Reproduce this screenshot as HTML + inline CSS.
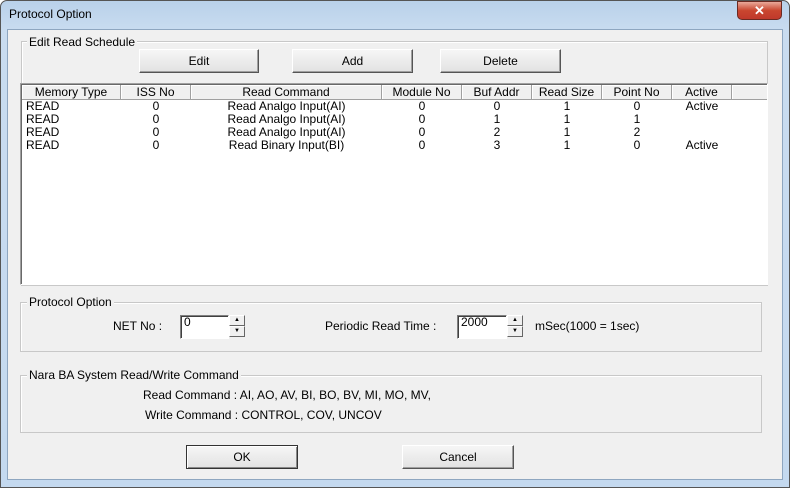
<!DOCTYPE html>
<html><head><style>
*{margin:0;padding:0;box-sizing:border-box}
body{width:790px;height:488px;background:#fff;font-family:"Liberation Sans",sans-serif;font-size:12px;color:#000;position:relative;overflow:hidden}
.abs{position:absolute}
.frame{left:0;top:0;width:790px;height:488px;border:1px solid #555;border-radius:7px 7px 0 0;background:linear-gradient(#b9d1ea,#c9dcf0 30px,#c4d9ef)}
.client{left:7px;top:29px;width:776px;height:451px;background:#f0f0f0;border:1px solid #8ea6c0}
.group{border:1px solid #c8c8c8;box-shadow:inset 1px 1px 0 #fff}
.legend{background:#f0f0f0;padding:0 2px;font-size:12px;line-height:14px}
.btn{background:linear-gradient(#f6f6f6,#e2e2e2);border:1px solid;border-color:#fff #555 #555 #fff;box-shadow:inset -1px -1px 0 #a0a0a0;text-align:center;line-height:22px}
.list{left:20px;top:83px;width:748px;height:202px;background:#fff;border:1px solid;border-color:#a0a0a0 #fff #fff #a0a0a0;box-shadow:inset 1px 1px 0 #696969}
.hd{top:1px;height:15px;line-height:14px;text-align:center;border-right:1px solid #a0a0a0;border-bottom:1px solid #a0a0a0;background:#f0f0f0;box-shadow:inset 1px 1px 0 #fff}
.c{text-align:center;line-height:13px}
.edit{background:#fff;border:1px solid;border-color:#808080 #fff #fff #808080;box-shadow:inset 1px 1px 0 #404040;padding-left:3px;line-height:13px}
.spin{width:16px;height:22px;background:#f0f0f0}
.spin div{height:11px;border:1px solid;border-color:#fff #666 #666 #fff;font-size:6px;text-align:center;line-height:9px}
</style></head><body>
<div class="abs frame"></div>
<div class="abs" style="left:9px;top:7px;font-size:12px">Protocol Option</div>
<div class="abs" style="left:737px;top:1px;width:45px;height:19px;border:1px solid #6b2a22;border-radius:0 0 5px 5px;background:linear-gradient(#e9a99a,#c9462f 50%,#c0392b);color:#fff;text-align:center;font-weight:bold;font-size:13px;line-height:17px">✕</div>
<div class="abs client"></div>

<div class="abs group" style="left:21px;top:41px;width:747px;height:245px"></div>
<div class="abs legend" style="left:27px;top:35px">Edit Read Schedule</div>
<div class="abs btn" style="left:139px;top:49px;width:120px;height:24px">Edit</div>
<div class="abs btn" style="left:292px;top:49px;width:121px;height:24px">Add</div>
<div class="abs btn" style="left:440px;top:49px;width:121px;height:24px">Delete</div>

<div class="abs list">
<div class="abs hd" style="left:1px;width:99px">Memory Type</div>
<div class="abs hd" style="left:100px;width:70px">ISS No</div>
<div class="abs hd" style="left:170px;width:191px">Read Command</div>
<div class="abs hd" style="left:361px;width:80px">Module No</div>
<div class="abs hd" style="left:441px;width:70px">Buf Addr</div>
<div class="abs hd" style="left:511px;width:70px">Read Size</div>
<div class="abs hd" style="left:581px;width:70px">Point No</div>
<div class="abs hd" style="left:651px;width:60px">Active</div>
<div class="abs hd" style="left:711px;width:35px;border-right:none"></div>
<div class="abs" style="left:5px;top:16px;line-height:13px">READ<br>READ<br>READ<br>READ</div>
<div class="abs c" style="left:100px;top:16px;width:70px">0<br>0<br>0<br>0</div>
<div class="abs c" style="left:170px;top:16px;width:191px">Read Analgo Input(AI)<br>Read Analgo Input(AI)<br>Read Analgo Input(AI)<br>Read Binary Input(BI)</div>
<div class="abs c" style="left:361px;top:16px;width:80px">0<br>0<br>0<br>0</div>
<div class="abs c" style="left:441px;top:16px;width:70px">0<br>1<br>2<br>3</div>
<div class="abs c" style="left:511px;top:16px;width:70px">1<br>1<br>1<br>1</div>
<div class="abs c" style="left:581px;top:16px;width:70px">0<br>1<br>2<br>0</div>
<div class="abs c" style="left:651px;top:16px;width:60px">Active<br><br><br>Active</div>
</div>

<div class="abs group" style="left:20px;top:302px;width:742px;height:50px"></div>
<div class="abs legend" style="left:27px;top:295px">Protocol Option</div>
<div class="abs" style="left:113px;top:319px">NET No :</div>
<div class="abs edit" style="left:180px;top:315px;width:49px;height:24px">0</div>
<div class="abs spin" style="left:229px;top:315px"><div>▲</div><div>▼</div></div>
<div class="abs" style="left:325px;top:319px">Periodic Read Time :</div>
<div class="abs edit" style="left:457px;top:315px;width:50px;height:24px">2000</div>
<div class="abs spin" style="left:507px;top:315px"><div>▲</div><div>▼</div></div>
<div class="abs" style="left:535px;top:319px">mSec(1000 = 1sec)</div>

<div class="abs group" style="left:20px;top:375px;width:742px;height:58px"></div>
<div class="abs legend" style="left:27px;top:368px">Nara BA System Read/Write Command</div>
<div class="abs" style="left:143px;top:388px">Read Command : AI, AO, AV, BI, BO, BV, MI, MO, MV,</div>
<div class="abs" style="left:145px;top:408px">Write Command : CONTROL, COV, UNCOV</div>

<div class="abs btn" style="left:186px;top:445px;width:112px;height:24px;border-color:#333;box-shadow:inset 1px 1px 0 #fff,inset -1px -1px 0 #888">OK</div>
<div class="abs btn" style="left:402px;top:445px;width:112px;height:24px">Cancel</div>
</body></html>
